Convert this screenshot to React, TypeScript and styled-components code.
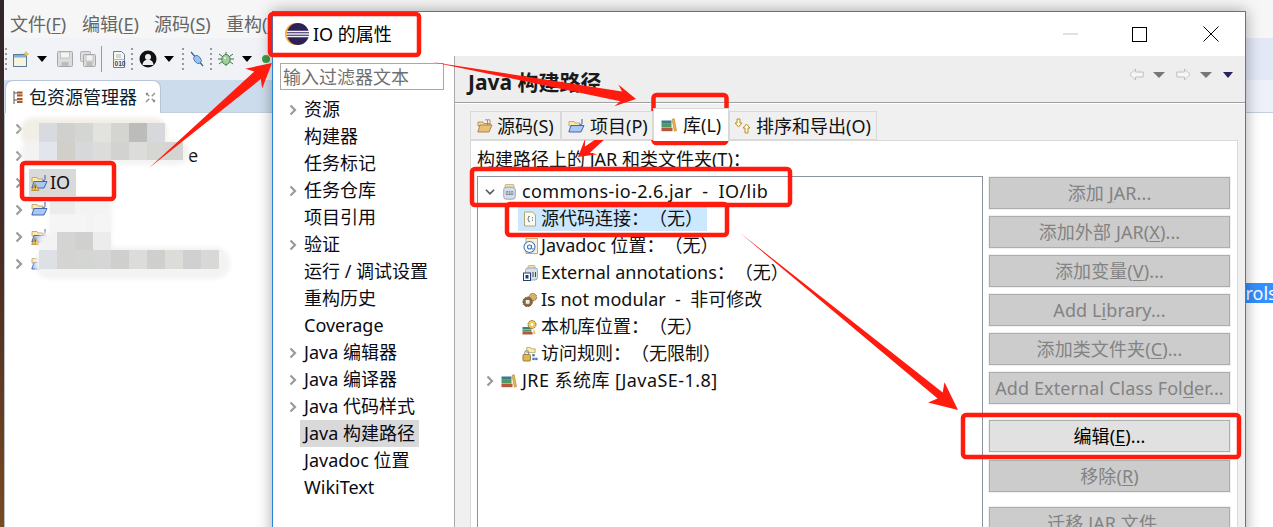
import React from "react";
import styled, { createGlobalStyle } from "styled-components";

const FONT = `"Noto Sans", "Noto Sans CJK SC", sans-serif`;

const Global = createGlobalStyle`
  html, body { margin: 0; padding: 0; background: #fff; overflow: hidden; }
  * { box-sizing: border-box; }
`;

const Stage = styled.div`
  position: relative;
  width: 1273px;
  height: 527px;
  overflow: hidden;
  display: flex;
  font: 18px/27px ${FONT};
  text-spacing-trim: space-all;
  color: #111;
  background: #fff;
`;
const DesktopStrip = styled.div`
  width: 4px;
  flex: none;
  background: linear-gradient(180deg, #30262a 0%, #4a2c22 50%, #7a4a20 100%);
`;
const Workbench = styled.div`
  flex: 1;
  display: flex;
  flex-direction: column;
  min-width: 0;
`;
const MenuBar = styled.div`
  height: 38px;
  display: flex;
  align-items: center;
  padding: 10px 0 0 6px;
  background: #f6f6f6;
  color: #666;
`;
const MenuItem = styled.span`
  width: 72px;
  flex: none;
  white-space: nowrap;
  u { text-underline-offset: 2px; }
`;
const ToolBar = styled.div`
  height: 42px;
  display: flex;
  align-items: center;
  background: linear-gradient(90deg, #f2f3f7 0%, #eef0f6 50%, #e3e8f6 100%);
`;
const ToolItem = styled.span<{ $ml: number }>`
  margin-left: ${(p) => p.$ml}px;
  display: flex;
  align-items: center;
  flex: none;
`;
const Grip = styled.span`
  width: 2px;
  height: 22px;
  background: repeating-linear-gradient(180deg, #9a9a9a 0 2px, transparent 2px 5px);
`;
const Sep = styled.span`
  width: 1px;
  height: 26px;
  background: #9a9a9a;
`;
const Caret = styled.span<{ $c?: string; $w?: number }>`
  width: 0;
  height: 0;
  border-left: ${(p) => (p.$w ?? 11) / 2}px solid transparent;
  border-right: ${(p) => (p.$w ?? 11) / 2}px solid transparent;
  border-top: ${(p) => ((p.$w ?? 11) * 6) / 11}px solid ${(p) => p.$c ?? "#000"};
`;
const ViewTabs = styled.div`
  height: 33px;
  display: flex;
  padding-left: 1px;
  background: linear-gradient(90deg, #cddcec 0%, #cddcec 40%, #eef1fa 100%);
  border-bottom: 1px solid #c4cedd;
`;
const ViewTab = styled.div`
  width: 156px;
  height: 33px;
  display: flex;
  align-items: center;
  padding-left: 7px;
  background: #fff;
  border: 1px solid #b9c5d6;
  border-bottom: none;
  border-radius: 8px 8px 0 0;
`;
const ViewTabLabel = styled.span`
  margin-left: 6px;
  color: #0c2030;
  white-space: nowrap;
  font-size: 18px;
`;
const ViewTabClose = styled.span`
  margin-left: 8px;
  display: flex;
`;
const ProjectTree = styled.div`
  flex: 1;
  padding-top: 2px;
  border-left: 1px solid #b9c0c8;
`;
const ProjectRow = styled.div`
  height: 27px;
  display: flex;
  align-items: center;
  padding-left: 10px;
`;
const ProjectIcon = styled.span`
  margin-left: 8px;
  display: flex;
`;
const SelectedProject = styled.span`
  display: flex;
  align-items: center;
  height: 27px;
  margin-left: 6px;
  padding: 0 6px 0 2px;
  background: #d9d9d9;
  gap: 2px;
`;
const TailText = styled.span<{ $ml: number }>`
  margin-left: ${(p) => p.$ml}px;
  white-space: nowrap;
`;
const SelectedTail = styled.div`
  margin: 6px 0 0 1234px;
  height: 20px;
  width: 40px;
  background: #3390ff;
  color: #fff;
  line-height: 20px;
  white-space: nowrap;
  overflow: hidden;
`;

/* dialog */
const Dialog = styled.div`
  position: absolute;
  left: 272px;
  top: 11px;
  width: 974px;
  height: 530px;
  display: flex;
  flex-direction: column;
  background: #fff;
  border: 1px solid #2a82d4;
  box-shadow: 0 0 14px rgba(0, 0, 0, 0.35);
`;
const TitleBar = styled.div`
  height: 44px;
  flex: none;
  display: flex;
  align-items: center;
  padding-left: 12px;
  background: #fff;
`;
const TitleText = styled.span`
  margin-left: 4px;
  color: #000;
  white-space: nowrap;
`;
const WinControls = styled.div`
  margin-left: auto;
  display: flex;
  align-items: center;
  gap: 0;
  padding-right: 26px;
`;
const WinBtn = styled.span<{ $ml: number }>`
  margin-left: ${(p) => p.$ml}px;
  display: flex;
`;
const DialogBody = styled.div`
  flex: 1;
  display: flex;
  min-height: 0;
`;
const NavPane = styled.div`
  width: 182px;
  flex: none;
  background: #fff;
  border-right: 1px solid #a9a9a9;
  padding: 7px 0 0 7px;
`;
const FilterInput = styled.div`
  width: 164px;
  height: 27px;
  border: 1px solid #a8a8a8;
  color: #707070;
  padding-left: 2px;
  line-height: 26px;
  white-space: nowrap;
  margin-bottom: 6px;
`;
const NavRow = styled.div`
  height: 27px;
  display: flex;
  align-items: center;
  padding-left: 9px;
`;
const ChevronSlot = styled.span`
  width: 8px;
  flex: none;
  display: flex;
`;
const NavLabel = styled.span<{ $sel?: boolean }>`
  margin-left: 3px;
  padding: 0 4px;
  height: 27px;
  white-space: nowrap;
  color: #0a0a14;
  background: ${(p) => (p.$sel ? "#d9d9d9" : "transparent")};
`;
const MainPane = styled.div`
  flex: 1;
  display: flex;
  flex-direction: column;
  min-width: 0;
  background: #f0f0f0;
`;
const PageHeader = styled.div`
  height: 47px;
  flex: none;
  display: flex;
  align-items: center;
  padding: 0 12px 0 13px;
  background: #eeeeee;
  border-bottom: 1px solid #a0a0a0;
  box-shadow: 0 1px 0 #fff;
`;
const PageTitle = styled.span`
  font-weight: 700;
  font-size: 21px;
  color: #1a1a1a;
  white-space: nowrap;
  margin-top: 6px;
`;
const PageNav = styled.div`
  margin-left: auto;
  display: flex;
  align-items: center;
  margin-top: -9px;
`;
const PageNavItem = styled.span<{ $ml: number }>`
  margin-left: ${(p) => p.$ml}px;
  display: flex;
`;
const PageContent = styled.div`
  flex: 1;
  display: flex;
  flex-direction: column;
  padding: 8px 7px 0 15px;
  min-height: 0;
`;
const TabRow = styled.div`
  height: 29px;
  flex: none;
  display: flex;
  align-items: flex-end;
  position: relative;
  z-index: 1;
`;
const Tab = styled.div<{ $w: number; $active?: boolean; $pl: number; $gap: number }>`
  width: ${(p) => p.$w}px;
  height: ${(p) => (p.$active ? 33 : 29)}px;
  margin-bottom: ${(p) => (p.$active ? -1 : 0)}px;
  display: flex;
  align-items: center;
  flex: none;
  padding: ${(p) => (p.$active ? 0 : 1)}px 0 0 ${(p) => p.$pl}px;
  gap: ${(p) => p.$gap}px;
  white-space: nowrap;
  background: ${(p) => (p.$active ? "#fff" : "#f0f0f0")};
  border: 1px solid #d9d9d9;
  border-bottom: ${(p) => (p.$active ? "none" : "1px solid #d9d9d9")};
  color: #111;
`;
const TabPanel = styled.div`
  flex: 1;
  min-height: 0;
  background: #fff;
  border: 1px solid #d9d9d9;
  padding: 6px 0 0 6px;
  display: flex;
  flex-direction: column;
`;
const PanelLabel = styled.div`
  height: 24px;
  line-height: 24px;
  margin-bottom: 5px;
  white-space: nowrap;
  color: #111;
`;
const PanelRow = styled.div`
  flex: 1;
  display: flex;
  min-height: 0;
`;
const ClasspathTree = styled.div`
  width: 506px;
  flex: none;
  padding-top: 1px;
  border: 1px solid #8a939e;
  white-space: pre;
`;
const CpRow = styled.div<{ $indent: number }>`
  height: 27px;
  display: flex;
  align-items: center;
  padding-left: ${(p) => p.$indent}px;
`;
const CpToggle = styled.span`
  width: 10px;
  flex: none;
  display: flex;
  justify-content: center;
`;
const CpIcon = styled.span`
  width: 16px;
  margin-left: 6px;
  display: flex;
  justify-content: center;
`;
const CpText = styled.span<{ $ls: number }>`
  margin-left: 5px;
  letter-spacing: ${(p) => p.$ls}px;
`;
const CpEntry = styled.span<{ $sel?: boolean }>`
  display: flex;
  align-items: center;
  height: 25px;
  padding: 0 4px;
  gap: 3px;
  background: ${(p) => (p.$sel ? "#cce8ff" : "transparent")};
`;
const CpEntryIcon = styled.span`
  width: 16px;
  flex: none;
  display: flex;
  justify-content: center;
`;
const ButtonColumn = styled.div`
  margin-left: 6px;
  width: 241px;
  flex: none;
  display: flex;
  flex-direction: column;
`;
const SideButton = styled.div<{ $mt: number; $on?: boolean }>`
  height: 32px;
  flex: none;
  margin-top: ${(p) => p.$mt}px;
  background: ${(p) => (p.$on ? "#e1e1e1" : "#cccccc")};
  color: ${(p) => (p.$on ? "#000" : "#838383")};
  border: 1px solid #adadad;
  box-shadow: 0 0 0 1px #f0f0f0;
  text-align: center;
  white-space: nowrap;
  line-height: 30px;
  letter-spacing: 0.1px;
  u { text-underline-offset: 2px; }
`;

const Overlay = styled.svg`
  position: absolute;
  left: 0;
  top: 0;
  width: 1273px;
  height: 527px;
  pointer-events: none;
`;

/* icons */
const Chevron = () => (
  <svg width="8" height="12" viewBox="0 0 8 12">
    <path d="M1.5 1.5 6 6l-4.5 4.5" fill="none" stroke="#9a9a9a" strokeWidth="2.2" />
  </svg>
);
const ChevronDown = () => (
  <svg width="11" height="8" viewBox="0 0 11 8">
    <path d="M1 1.5l4.5 4.5L10 1.5" fill="none" stroke="#555" strokeWidth="1.8" />
  </svg>
);
const FolderOpen = ({ warn }: { warn?: boolean }) => (
  <svg width="17" height="17" viewBox="0 0 17 17">
    <path d="M1 3.5h5l1 1.5h5v3H1z" fill="#fde9a9" stroke="#b99b5a" strokeWidth=".8" />
    <path d="M3 7.5h13l-3 6.5H.8z" fill="#a9c8f3" stroke="#3559ad" strokeWidth=".9" />
    <path d="M14 1v4.5a1.5 1.5 0 0 1-2.5.8" fill="none" stroke="#3559ad" strokeWidth="1" />
    {warn && (
      <>
        <path d="M4.2 9.5 8 16.5H.6z" fill="#f6c65b" stroke="#a97a20" strokeWidth=".7" />
        <path d="M4.2 11.5v2.6M4.2 14.8v.8" stroke="#222" strokeWidth=".9" />
      </>
    )}
  </svg>
);
const Books = () => (
  <svg width="16" height="14" viewBox="0 0 16 14">
    <rect x="0.5" y="2.5" width="10" height="3.3" fill="#3c7a8c" />
    <rect x="0.5" y="6" width="10" height="3.3" fill="#4f9a62" />
    <rect x="0.5" y="9.6" width="11" height="3.6" fill="#b4593d" />
    <path d="M11 1.5l2.2-.9 2.4 12-2.3.6z" fill="#e8b64c" stroke="#a67c22" strokeWidth=".5" />
  </svg>
);
const JarIcon = () => (
  <svg width="13" height="16" viewBox="0 0 13 16">
    <rect x="2" y="0.5" width="9" height="3" rx="1" fill="#efe2b0" stroke="#b8a26a" strokeWidth=".7" />
    <rect x="0.7" y="3.2" width="11.6" height="12" rx="2.5" fill="#d5dde8" stroke="#8c98a8" strokeWidth=".8" />
    <text x="6.5" y="11" textAnchor="middle" fontSize="4.6" fontFamily="Liberation Sans, sans-serif" fill="#333a55">010</text>
  </svg>
);
const DocIcon = () => (
  <svg width="14" height="16" viewBox="0 0 14 16">
    <path d="M1.5 1h8l3 3v11h-11z" fill="#fbfaf0" stroke="#b5a678" strokeWidth="1" />
    <path d="M7 5.5H5.5v2L4.5 8l1 .5v2H7M9 6.5h1M9 8h1M9 9.500h1" fill="none" stroke="#6a7f95" strokeWidth=".9" />
  </svg>
);
const AtDocIcon = () => (
  <svg width="15" height="16" viewBox="0 0 15 16">
    <rect x="3" y="0.5" width="11.500" height="15" fill="#f7f0d8" stroke="#b09a60" strokeWidth=".8" />
    <circle cx="6.500" cy="9" r="5.500" fill="#fff" stroke="#3f78b5" strokeWidth="1.100" />
    <circle cx="6.500" cy="9" r="2" fill="none" stroke="#3f78b5" strokeWidth="1.100" />
    <path d="M8.500 7v3a1.300 1.300 0 0 0 2.300.500" fill="none" stroke="#3f78b5" strokeWidth="1" />
  </svg>
);
const AnnotJar = () => (
  <svg width="15" height="16" viewBox="0 0 15 16">
    <rect x="5" y="0.500" width="7" height="3" rx="1" fill="#efe2b0" stroke="#b8a26a" strokeWidth=".7" />
    <rect x="2.500" y="3" width="12" height="12" rx="2.500" fill="#d7dfe9" stroke="#8c98a8" strokeWidth=".8" />
    <rect x="0.500" y="8" width="7" height="7.500" fill="#fff" stroke="#23406d" strokeWidth="1" />
    <rect x="2.500" y="10" width="3" height="3.500" fill="#23406d" />
    <path d="M10 7v5M12.500 7v5" stroke="#3a4a66" strokeWidth="1" />
  </svg>
);
const Gears = () => (
  <svg width="17" height="16" viewBox="0 0 17 16">
    <circle cx="11.500" cy="5" r="4" fill="#d5b26b" stroke="#7a6030" strokeWidth="1" strokeDasharray="1.600 .8" />
    <circle cx="6" cy="10" r="5" fill="#8a6a45" stroke="#5a4326" strokeWidth="1" strokeDasharray="2 .8" />
    <rect x="4" y="8" width="4" height="4" fill="#f2efe8" />
  </svg>
);
const NativeIcon = () => (
  <svg width="16" height="16" viewBox="0 0 16 16">
    <rect x="0.500" y="8" width="9" height="2.300" fill="#3c7a8c" />
    <rect x="0.500" y="10.500" width="9" height="2.300" fill="#4f9a62" />
    <rect x="0.500" y="13" width="10" height="2.500" fill="#b4593d" />
    <circle cx="10" cy="5.500" r="4" fill="#ecc762" stroke="#8a6c22" strokeWidth="1" strokeDasharray="1.700 .8" />
    <circle cx="10" cy="5.500" r="1.400" fill="#fff" />
    <path d="M11.500 9l2 5.500-2 .8z" fill="#e8b64c" />
  </svg>
);
const AccessIcon = () => (
  <svg width="17" height="16" viewBox="0 0 17 16">
    <path d="M5 1h4l1 1.500h4v4H5z" fill="#fde9a9" stroke="#b09a60" strokeWidth=".8" />
    <rect x="11" y="8" width="2.500" height="2.500" fill="#3f78b5" />
    <rect x="14" y="12" width="2.500" height="2.500" fill="#3f78b5" />
    <rect x="11" y="12" width="2.500" height="2.500" fill="#3f78b5" />
    <rect x="1" y="8.500" width="8" height="7" rx="1" fill="#e0b64e" stroke="#7f6220" strokeWidth=".8" />
    <path d="M3 8.500V6.500a2 2 0 0 1 4 0v2" fill="none" stroke="#8c8c8c" strokeWidth="1.100" />
  </svg>
);
const SourceFolder = () => (
  <svg width="16" height="14" viewBox="0 0 16 14">
    <path d="M1 3h5l1 1.500h6V7H1z" fill="#f5d9a0" stroke="#a5803f" strokeWidth=".8" />
    <path d="M3 6h12l-3 7H.8z" fill="#e9bf7a" stroke="#a5803f" strokeWidth=".9" />
    <path d="M8 0.800h5v5M10.500 1v5" fill="none" stroke="#a5803f" strokeWidth=".8" />
  </svg>
);
const OrderIcon = () => (
  <svg width="16" height="16" viewBox="0 0 16 16">
    <path d="M3 1h3v4h2L4.500 9 1 5h2z" fill="#fff6d5" stroke="#b8912f" strokeWidth="1" />
    <path d="M11 15V10H9l3.500-4L16 10h-2v5z" fill="#fff6d5" stroke="#b8912f" strokeWidth="1" />
  </svg>
);
const PackageViewIcon = () => (
  <svg width="10" height="13" viewBox="0 0 10 13">
    <path d="M1 0v13M1 2h3M1 9h3" stroke="#555" strokeWidth="1" fill="none" />
    <rect x="4" y="0.500" width="5.500" height="5" fill="#a85b2a" />
    <rect x="4" y="7" width="5.500" height="5" fill="#a85b2a" />
    <path d="M4 3h5.500M4 9.500h5.500" stroke="#fff" strokeWidth=".7" />
  </svg>
);
const CloseX = () => (
  <svg width="11" height="11" viewBox="0 0 11 11">
    <path d="M1 1l9 9M10 1l-9 9M1 3l2-2M8 10l2-2" stroke="#8a8a8a" strokeWidth="1.200" fill="none" />
    <path d="M3 5.500 5.500 3 8 5.500 5.500 8z" fill="#fff" />
  </svg>
);
const NewIcon = () => (
  <svg width="16" height="16" viewBox="0 0 16 16">
    <rect x="0.500" y="3.500" width="13" height="12" fill="#f7f3dd" stroke="#5a7a9a" strokeWidth="1" />
    <rect x="1" y="4" width="12" height="2.500" fill="#7fb0dd" />
    <path d="M13 .5l.8 1.800 1.800.7-1.800.8-.8 1.800-.8-1.800-1.800-.8 1.800-.7z" fill="#f3cf57" stroke="#c49a28" strokeWidth=".5" />
  </svg>
);
const SaveIcon = ({ all }: { all?: boolean }) => (
  <svg width="16" height="16" viewBox="0 0 16 16">
    {all && <rect x="0.500" y="0.500" width="10" height="10" rx="1" fill="#ddd" stroke="#b0b0b0" />}
    <rect x={all ? 3.500 : 0.500} y={all ? 3.500 : 0.500} width={all ? 12 : 15} height={all ? 12 : 15} rx="1" fill="#dcdcdc" stroke="#a8a8a8" />
    <rect x={all ? 6 : 3.500} y={all ? 4 : 1} width={all ? 7 : 9} height="6" fill="#f3f3f3" stroke="#b5b5b5" strokeWidth=".7" />
    <rect x={all ? 6.500 : 4.500} y="11" width={all ? 6 : 7} height="4" fill="#bcbcbc" />
  </svg>
);
const BinFile = () => (
  <svg width="16" height="17" viewBox="0 0 16 17">
    <path d="M1.500.5h8l3 3v5h-11z" fill="#f7f6ee" stroke="#6c7f95" strokeWidth="1" />
    <path d="M1.500 8.500v8h11v-8" fill="#f7f6ee" stroke="#6c7f95" strokeWidth="1" />
    <path d="M4 4h5M4 6h5" stroke="#9aa7b5" strokeWidth=".8" />
    <text x="8" y="15" textAnchor="middle" fontSize="6.600" fontWeight="700" fontFamily="Liberation Sans, sans-serif" fill="#2c4a78">010</text>
  </svg>
);
const Avatar = () => (
  <svg width="18" height="18" viewBox="0 0 18 18">
    <circle cx="9" cy="9" r="8.500" fill="#111" />
    <circle cx="9" cy="7" r="3" fill="#eee" />
    <path d="M3.500 15a5.500 5.500 0 0 1 11 0z" fill="#eee" />
  </svg>
);
const PinIcon = () => (
  <svg width="14" height="16" viewBox="0 0 14 16">
    <path d="M1 1l12 14" stroke="#2a5f9e" strokeWidth="1.200" />
    <ellipse cx="7.500" cy="8.500" rx="3.200" ry="4.500" transform="rotate(-40 7.500 8.500)" fill="#9cc3ea" stroke="#3c6ea6" strokeWidth=".8" />
  </svg>
);
const BugIcon = () => (
  <svg width="16" height="16" viewBox="0 0 16 16">
    <path d="M8 1v14M1 3l14 10M15 3 1 13M0 8h16" stroke="#4e6a4e" strokeWidth="1" />
    <ellipse cx="8" cy="8.500" rx="4.200" ry="5" fill="#9ccf9a" stroke="#3f7a45" strokeWidth=".9" />
    <circle cx="7" cy="7" r="1.200" fill="#dff1d8" />
  </svg>
);
const GreenRun = () => (
  <svg width="8" height="16" viewBox="0 0 8 16">
    <circle cx="4" cy="8" r="4" fill="#3f9a45" />
  </svg>
);
const EclipseLogo = () => (
  <svg width="24" height="24" viewBox="0 0 24 24">
    <circle cx="11" cy="12" r="11" fill="#f3a93c" />
    <circle cx="13" cy="12" r="11" fill="#2c2255" />
    <path d="M2 9.500h22M1.500 12h23M2 14.500h22" stroke="#f4f1ff" strokeWidth="1.300" />
  </svg>
);
const NavArrow = ({ flip }: { flip?: boolean }) => (
  <svg width="15" height="13" viewBox="0 0 15 13" style={flip ? { transform: "scaleX(-1)" } : undefined}>
    <path d="M.8 6.500 6.500 1v3h7.700v5H6.500v3z" fill="#f6f6f6" stroke="#c0c0c0" strokeWidth="1" />
  </svg>
);
const MinLine = () => (
  <svg width="15" height="2" viewBox="0 0 15 2"><path d="M0 1h15" stroke="#c4c4c4" /></svg>
);
const MaxBox = () => (
  <svg width="15" height="15" viewBox="0 0 15 15"><rect x=".5" y=".5" width="14" height="14" fill="none" stroke="#000" /></svg>
);
const CloseBox = () => (
  <svg width="16" height="16" viewBox="0 0 16 16"><path d="M.5.500l15 15M15.500.500l-15 15" stroke="#000" /></svg>
);

/* data */
const navItems: [string, boolean][] = [
  ["资源", true], ["构建器", false], ["任务标记", false], ["任务仓库", true], ["项目引用", false],
  ["验证", true], ["运行 / 调试设置", false], ["重构历史", false], ["Coverage", false],
  ["Java 编辑器", true], ["Java 编译器", true], ["Java 代码样式", true], ["Java 构建路径", false],
  ["Javadoc 位置", false], ["WikiText", false],
];

type Btn = { key: string; mt: number; on?: boolean; label: React.ReactNode };
const buttons: Btn[] = [
  { key: "a", mt: 1, label: <>添加 <u>J</u>AR...</> },
  { key: "b", mt: 7, label: <>添加外部 JAR(<u>X</u>)...</> },
  { key: "c", mt: 7, label: <>添加变量(<u>V</u>)...</> },
  { key: "d", mt: 7, label: <>Add L<u>i</u>brary...</> },
  { key: "e", mt: 7, label: <>添加类文件夹(<u>C</u>)...</> },
  { key: "f", mt: 7, label: <>Add External Class Fol<u>d</u>er...</> },
  { key: "g", mt: 16, on: true, label: <>编辑(<u>E</u>)...</> },
  { key: "h", mt: 8, label: <>移除(<u>R</u>)</> },
  { key: "i", mt: 15, label: <>迁移 JAR 文件...</> },
];

const cpChildren: [React.ReactNode, string, boolean][] = [
  [<DocIcon />, "源代码连接：（无）", true],
  [<AtDocIcon />, "Javadoc 位置：（无）", false],
  [<AnnotJar />, "External annotations：（无）", false],
  [<Gears />, "Is not modular  -  非可修改", false],
  [<NativeIcon />, "本机库位置：（无）", false],
  [<AccessIcon />, "访问规则：（无限制）", false],
];

const arrow = (tx: number, ty: number, hx: number, hy: number, neck: number, len: number, half: number) => {
  const d = Math.hypot(hx - tx, hy - ty);
  const ux = (hx - tx) / d;
  const uy = (hy - ty) / d;
  const nx = -uy;
  const ny = ux;
  const bx = hx - ux * len;
  const by = hy - uy * len;
  const nbx = hx - ux * (len - 5);
  const nby = hy - uy * (len - 5);
  const pts = [
    [tx, ty],
    [nbx + nx * neck, nby + ny * neck],
    [bx + nx * half, by + ny * half],
    [hx, hy],
    [bx - nx * half, by - ny * half],
    [nbx - nx * neck, nby - ny * neck],
  ];
  return pts.map((p) => `${p[0].toFixed(1)},${p[1].toFixed(1)}`).join(" ");
};

const boxes = [
  [270, 14, 149, 41],
  [22, 163, 92, 36],
  [653.500, 95, 73, 48],
  [472, 169, 318, 36],
  [507, 204, 220, 31],
  [963, 415, 276, 42],
];

const mosaic: [number, number, number, string][] = [
  [39, 123, 18, "#d7dbe0"], [57, 123, 18, "#d0d0ce"], [75, 123, 18, "#d4d6d4"], [93, 123, 18, "#e2e2de"],
  [111, 123, 18, "#d4d4d0"], [129, 123, 18, "#bcbcba"], [147, 123, 18, "#d6d8dc"],
  [39, 142, 18, "#e2e6ec"], [57, 142, 18, "#d0cfca"], [75, 142, 18, "#d6d8da"], [93, 142, 18, "#dcdcda"],
  [111, 142, 18, "#d2d2d0"], [129, 142, 18, "#dcdcda"], [147, 142, 18, "#d6d6d2"], [165, 142, 18, "#d4d4d2"],
  [50, 200, 18, "#ececec"], [57, 200, 18, "#ececec"],
  [50, 214, 18, "#f5f5f5"], [68, 214, 18, "#f5f5f5"], [93, 214, 18, "#f5f5f5"],
  [57, 232, 18, "#d4d4d4"], [75, 232, 18, "#d0d0ce"], [93, 232, 18, "#ececec"],
  [39, 250, 18, "#dde1e6"], [57, 250, 18, "#d4d4d2"], [75, 250, 18, "#d4d6d4"], [93, 250, 18, "#d6d6d6"],
  [111, 250, 18, "#cfcfcd"], [129, 250, 18, "#dcdcda"], [147, 250, 18, "#cfcfcd"], [165, 250, 18, "#dcdcd8"],
  [183, 250, 18, "#d0d0d0"], [201, 250, 18, "#d8d8d6"],
];

export default function App() {
  return (
    <>
      <Global />
      <Stage lang="zh-CN">
        <DesktopStrip />
        <Workbench>
          <MenuBar>
            <MenuItem>文件(<u>F</u>)</MenuItem>
            <MenuItem>编辑(<u>E</u>)</MenuItem>
            <MenuItem>源码(<u>S</u>)</MenuItem>
            <MenuItem>重构(<u>T</u>)</MenuItem>
          </MenuBar>
          <ToolBar>
            <ToolItem $ml={1}><Grip /></ToolItem>
            <ToolItem $ml={6}><NewIcon /></ToolItem>
            <ToolItem $ml={8}><Caret /></ToolItem>
            <ToolItem $ml={10}><SaveIcon /></ToolItem>
            <ToolItem $ml={7}><SaveIcon all /></ToolItem>
            <ToolItem $ml={5}><Sep /></ToolItem>
            <ToolItem $ml={10}><BinFile /></ToolItem>
            <ToolItem $ml={3}><Grip /></ToolItem>
            <ToolItem $ml={6}><Avatar /></ToolItem>
            <ToolItem $ml={7}><Caret /></ToolItem>
            <ToolItem $ml={8}><Grip /></ToolItem>
            <ToolItem $ml={6}><PinIcon /></ToolItem>
            <ToolItem $ml={6}><Grip /></ToolItem>
            <ToolItem $ml={6}><BugIcon /></ToolItem>
            <ToolItem $ml={8}><Caret /></ToolItem>
            <ToolItem $ml={10}><GreenRun /></ToolItem>
          </ToolBar>
          <ViewTabs>
            <ViewTab>
              <PackageViewIcon />
              <ViewTabLabel>包资源管理器</ViewTabLabel>
              <ViewTabClose><CloseX /></ViewTabClose>
            </ViewTab>
          </ViewTabs>
          <ProjectTree>
            <ProjectRow><Chevron /></ProjectRow>
            <ProjectRow><Chevron /><TailText $ml={165}>e</TailText></ProjectRow>
            <ProjectRow><Chevron /><SelectedProject><FolderOpen warn />IO</SelectedProject></ProjectRow>
            <ProjectRow><Chevron /><ProjectIcon><FolderOpen /></ProjectIcon></ProjectRow>
            <ProjectRow><Chevron /><ProjectIcon><FolderOpen warn /></ProjectIcon></ProjectRow>
            <ProjectRow><Chevron /><ProjectIcon><FolderOpen /></ProjectIcon></ProjectRow>
            <SelectedTail>trols</SelectedTail>
          </ProjectTree>
        </Workbench>

        <Overlay viewBox="0 0 1273 527">
          <defs>
            <filter id="halo" x="-20%" y="-20%" width="140%" height="140%">
              <feGaussianBlur stdDeviation="2" />
            </filter>
          </defs>
          <g filter="url(#halo)" fill="#f3f3f3">
            <rect x="21" y="118" width="146" height="28" rx="12" fill="#f1eee6" />
            <rect x="21" y="140" width="168" height="25" rx="12" />
            <rect x="50" y="199" width="62" height="36" rx="6" />
            <rect x="38" y="232" width="74" height="24" rx="10" />
            <rect x="35" y="247" width="195" height="32" rx="15" />
          </g>
          {mosaic.map(([x, y, s, c], i) => (
            <rect key={i} x={x} y={y} width={s} height={y === 123 || y === 250 ? 19 : 18} fill={c} />
          ))}
        </Overlay>

        <Dialog>
          <TitleBar>
            <EclipseLogo />
            <TitleText>IO 的属性</TitleText>
            <WinControls>
              <WinBtn $ml={0}><MinLine /></WinBtn>
              <WinBtn $ml={54}><MaxBox /></WinBtn>
              <WinBtn $ml={56}><CloseBox /></WinBtn>
            </WinControls>
          </TitleBar>
          <DialogBody>
            <NavPane>
              <FilterInput>输入过滤器文本</FilterInput>
              {navItems.map(([t, c]) => (
                <NavRow key={t}>
                  <ChevronSlot>{c && <Chevron />}</ChevronSlot>
                  <NavLabel $sel={t === "Java 构建路径"}>{t}</NavLabel>
                </NavRow>
              ))}
            </NavPane>
            <MainPane>
              <PageHeader>
                <PageTitle>Java 构建路径</PageTitle>
                <PageNav>
                  <NavArrow />
                  <PageNavItem $ml={9}><Caret $c="#777" $w={12} /></PageNavItem>
                  <PageNavItem $ml={11}><NavArrow flip /></PageNavItem>
                  <PageNavItem $ml={9}><Caret $c="#777" $w={12} /></PageNavItem>
                  <PageNavItem $ml={11}><Caret $c="#2f1f5f" $w={11} /></PageNavItem>
                </PageNav>
              </PageHeader>
              <PageContent>
                <TabRow>
                  <Tab $w={91} $pl={6} $gap={4}><SourceFolder />源码(S)</Tab>
                  <Tab $w={92} $pl={6} $gap={5}><FolderOpen />项目(P)</Tab>
                  <Tab $w={76} $pl={7} $gap={6} $active><Books />库(L)</Tab>
                  <Tab $w={148} $pl={4} $gap={6}><OrderIcon />排序和导出(O)</Tab>
                </TabRow>
                <TabPanel>
                  <PanelLabel>构建路径上的 JAR 和类文件夹(T)：</PanelLabel>
                  <PanelRow>
                    <ClasspathTree>
                      <CpRow $indent={7}>
                        <CpToggle><ChevronDown /></CpToggle>
                        <CpIcon><JarIcon /></CpIcon>
                        <CpText $ls={0.38}>commons-io-2.6.jar  -  IO/lib</CpText>
                      </CpRow>
                      {cpChildren.map(([icon, text, sel]) => (
                        <CpRow $indent={40} key={text}>
                          <CpEntry $sel={sel}><CpEntryIcon>{icon}</CpEntryIcon>{text}</CpEntry>
                        </CpRow>
                      ))}
                      <CpRow $indent={7}>
                        <CpToggle><Chevron /></CpToggle>
                        <CpIcon><Books /></CpIcon>
                        <CpText $ls={0.45}>JRE 系统库 [JavaSE-1.8]</CpText>
                      </CpRow>
                    </ClasspathTree>
                    <ButtonColumn>
                      {buttons.map((b) => (
                        <SideButton key={b.key} $mt={b.mt} $on={b.on}>{b.label}</SideButton>
                      ))}
                    </ButtonColumn>
                  </PanelRow>
                </TabPanel>
              </PageContent>
            </MainPane>
          </DialogBody>
        </Dialog>

        <Overlay viewBox="0 0 1273 527">
          {boxes.map(([x, y, w, h], i) => (
            <rect key={i} x={x} y={y} width={w} height={h} rx="3" fill="none" stroke="#ff1c0f" strokeWidth="4.500" />
          ))}
          <polygon fill="#ff1c0f" points={arrow(149, 168, 272, 63, 5, 24, 13)} />
          <polygon fill="#ff1c0f" points={arrow(432, 62, 636, 99, 5, 20, 11)} />
          <polygon fill="#ff1c0f" points={arrow(630, 116, 578, 157, 4, 17, 10)} />
          <polygon fill="#ff1c0f" points={arrow(740, 233, 958, 410, 4, 28, 13)} />
        </Overlay>
      </Stage>
    </>
  );
}
